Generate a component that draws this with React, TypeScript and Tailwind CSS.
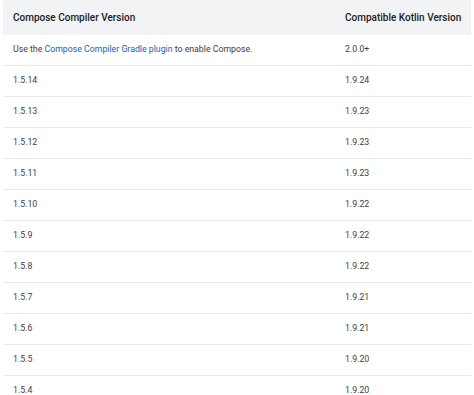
const rows: [string, string][] = [
  ['1.5.14', '1.9.24'],
  ['1.5.13', '1.9.23'],
  ['1.5.12', '1.9.23'],
  ['1.5.11', '1.9.23'],
  ['1.5.10', '1.9.22'],
  ['1.5.9', '1.9.22'],
  ['1.5.8', '1.9.22'],
  ['1.5.7', '1.9.21'],
  ['1.5.6', '1.9.21'],
  ['1.5.5', '1.9.20'],
  ['1.5.4', '1.9.20'],
]

function Row({ left, right }: { left: React.ReactNode; right: string }) {
  return (
    <div className="grid grid-cols-[332px_1fr] h-[31px] items-center border-b border-[#e8eaed] text-[8.75px] text-[#3c4043] whitespace-nowrap">
      <div className="pl-[10px]">{left}</div>
      <div className="pl-[10px]">{right}</div>
    </div>
  )
}

export default function App() {
  return (
    <div className="bg-white w-[474px] h-[395px] overflow-hidden font-['Roboto',sans-serif]">
      <div className="ml-[3px] w-[468px]">
        <div className="grid grid-cols-[332px_1fr] h-[35px] items-center bg-[#f1f3f4] text-[10px] font-medium text-[#202124] pb-[1px] whitespace-nowrap">
          <div className="pl-[10px]">Compose Compiler Version</div>
          <div className="pl-[10px]">Compatible Kotlin Version</div>
        </div>
        <Row
          left={
            <>
              Use the <span className="text-[#1a5fb4]">Compose Compiler Gradle plugin</span> to enable Compose.
            </>
          }
          right="2.0.0+"
        />
        {rows.map(([a, b]) => (
          <Row key={a} left={a} right={b} />
        ))}
      </div>
    </div>
  )
}
